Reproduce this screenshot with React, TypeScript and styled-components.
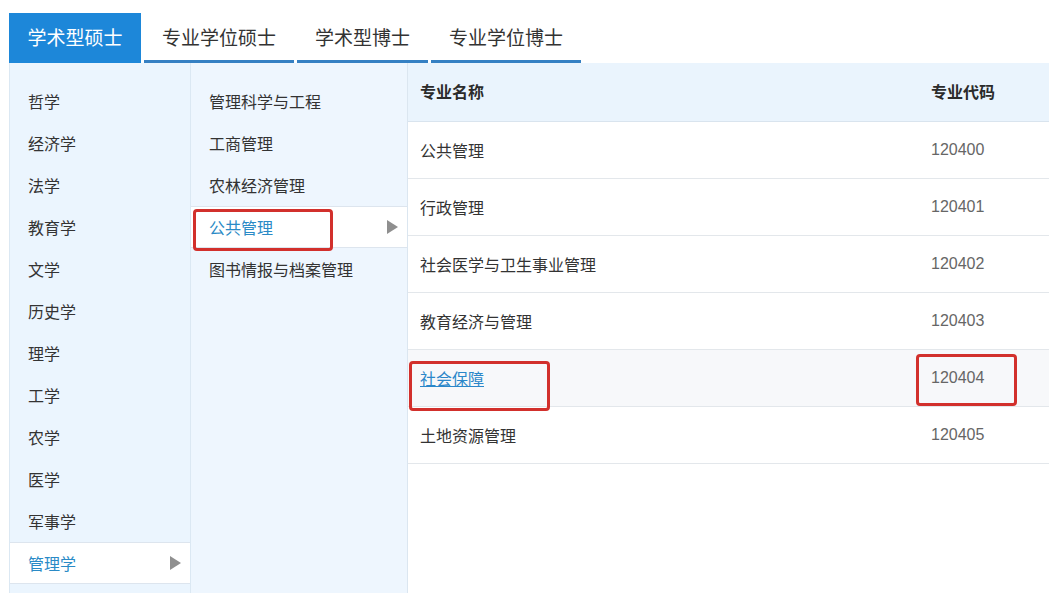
import styled, { createGlobalStyle, css } from "styled-components";

const GlobalStyle = createGlobalStyle`
  html, body {
    margin: 0;
    padding: 0;
    background: #ffffff;
    overflow: hidden;
  }
  body {
    font-family: "Liberation Sans", "Noto Sans CJK SC", sans-serif;
    color: #333333;
  }
`;

const degreeTabs = ["学术型硕士", "专业学位硕士", "学术型博士", "专业学位博士"];

const disciplines = [
  "哲学",
  "经济学",
  "法学",
  "教育学",
  "文学",
  "历史学",
  "理学",
  "工学",
  "农学",
  "医学",
  "军事学",
  "管理学",
];

const categories = [
  "管理科学与工程",
  "工商管理",
  "农林经济管理",
  "公共管理",
  "图书情报与档案管理",
];

const majors = [
  { name: "公共管理", code: "120400" },
  { name: "行政管理", code: "120401" },
  { name: "社会医学与卫生事业管理", code: "120402" },
  { name: "教育经济与管理", code: "120403" },
  { name: "社会保障", code: "120404", link: true },
  { name: "土地资源管理", code: "120405" },
];

export default function App() {
  return (
    <>
      <GlobalStyle />
      <Page>
        <TabBar>
          {degreeTabs.map((tab, i) => (
            <Tab key={tab} active={i === 0}>
              {tab}
            </Tab>
          ))}
        </TabBar>

        <Panel>
          <DisciplineList>
            {disciplines.map((d) => (
              <MenuItem key={d} selected={d === "管理学"}>
                {d}
                {d === "管理学" && <Arrow />}
              </MenuItem>
            ))}
          </DisciplineList>

          <CategoryList>
            {categories.map((c) => (
              <MenuItem key={c} selected={c === "公共管理"}>
                {c}
                {c === "公共管理" && (
                  <>
                    <Arrow />
                    <Mark style={{ left: 2, top: 2, width: 140, height: 42 }} />
                  </>
                )}
              </MenuItem>
            ))}
          </CategoryList>

          <MajorTable>
            <HeadRow>
              <NameCell>专业名称</NameCell>
              <CodeCell>专业代码</CodeCell>
            </HeadRow>
            {majors.map((m) => (
              <Row key={m.code} hover={!!m.link}>
                <NameCell>
                  {m.link ? <MajorLink href="#">{m.name}</MajorLink> : m.name}
                  {m.link && (
                    <Mark style={{ left: 1, top: 11, width: 141, height: 50 }} />
                  )}
                </NameCell>
                <CodeCell>
                  <Code>{m.code}</Code>
                  {m.link && (
                    <Mark style={{ left: -15, top: 4, width: 101, height: 52 }} />
                  )}
                </CodeCell>
              </Row>
            ))}
          </MajorTable>
        </Panel>
      </Page>
    </>
  );
}

const Page = styled.div`
  padding: 13px 0 0 9px;
  height: 580px;
  display: flex;
  flex-direction: column;
`;

const TabBar = styled.div`
  display: flex;
  gap: 3px;
  height: 50px;
`;

const Tab = styled.div<{ active?: boolean }>`
  display: flex;
  align-items: center;
  justify-content: center;
  padding: 0 18px;
  font-size: 19px;
  line-height: 1;
  box-sizing: border-box;

  ${({ active }) =>
    active
      ? css`
          width: 132px;
          background-color: #1d87d9;
          color: #ffffff;
        `
      : css`
          color: #333333;
          border-bottom: 3px solid #3580c3;
          padding-top: 3px;
        `}
`;

const Panel = styled.div`
  flex: 1;
  display: flex;
  min-height: 0;
`;

const DisciplineList = styled.div`
  width: 180px;
  padding-top: 17px;
  background-color: #ebf5fe;
  border-left: 1px solid #dbe8f3;
  border-right: 1px solid #dbe8f3;
`;

const CategoryList = styled.div`
  width: 216px;
  padding-top: 17px;
  background-color: #eef6fe;
  border-right: 1px solid #dbe6f0;
`;

const MenuItem = styled.div<{ selected?: boolean }>`
  position: relative;
  display: flex;
  align-items: center;
  height: 42px;
  padding-left: 18px;
  box-sizing: border-box;
  font-size: 16px;
  color: #333333;

  ${({ selected }) =>
    selected &&
    css`
      background-color: #ffffff;
      color: #2a8ac6;
      border-top: 1px solid #dde5ee;
      border-bottom: 1px solid #dde5ee;
    `}
`;

const Arrow = styled.span`
  position: absolute;
  right: 9px;
  top: 50%;
  margin-top: -7px;
  width: 0;
  height: 0;
  border-top: 7px solid transparent;
  border-bottom: 7px solid transparent;
  border-left: 11px solid #8f8f8f;
`;

const Mark = styled.span`
  position: absolute;
  box-sizing: border-box;
  border: 3px solid #d2302c;
  border-radius: 4px;
  pointer-events: none;
`;

const MajorTable = styled.div`
  flex: 1;
  display: flex;
  flex-direction: column;
  background-color: #ffffff;
`;

const HeadRow = styled.div`
  display: flex;
  align-items: center;
  height: 59px;
  box-sizing: border-box;
  background-color: #eaf4fd;
  border-bottom: 1px solid #d9e4ee;
  font-weight: 700;
  font-size: 16px;
  color: #2b2b2b;
  padding-bottom: 2px;
`;

const Row = styled.div<{ hover?: boolean }>`
  display: flex;
  align-items: center;
  height: 57px;
  box-sizing: border-box;
  border-bottom: 1px solid #e3e7eb;
  font-size: 16px;
  color: #333333;
  padding-bottom: 1px;
  background-color: ${({ hover }) => (hover ? "#f7f8fa" : "#ffffff")};
`;

const NameCell = styled.div`
  position: relative;
  width: 511px;
  padding-left: 12px;
  align-self: stretch;
  display: flex;
  align-items: center;
`;

const CodeCell = styled.div`
  position: relative;
  flex: 1;
  align-self: stretch;
  display: flex;
  align-items: center;
`;

const Code = styled.span`
  color: #666666;
`;

const MajorLink = styled.a`
  color: #2b87c9;
  text-decoration: underline;
`;
